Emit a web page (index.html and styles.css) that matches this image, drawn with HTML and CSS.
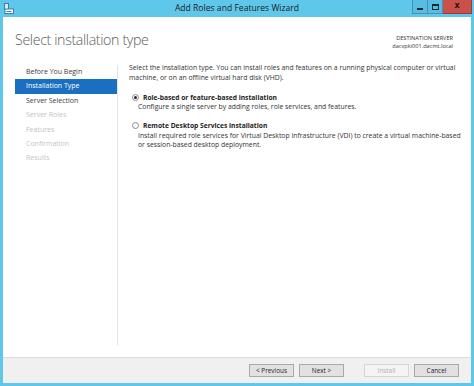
FILE: index.html
```html
<!DOCTYPE html>
<html>
<head>
<meta charset="utf-8">
<link rel="stylesheet" href="styles.css">
</head>
<body>
<div class="window">
  <div class="titlebar">
    <div class="tb-left">
      <svg class="app-icon" width="10" height="11" viewBox="0 0 10 11">
        <rect x="0.5" y="0.5" width="4" height="6" fill="#d9eef8" stroke="#3a7fae" stroke-width="1"/>
        <rect x="1" y="6" width="8.5" height="4.5" fill="#ffffff" stroke="#3a7fae" stroke-width="1"/>
        <rect x="2.5" y="8" width="5" height="1" fill="#3a7fae"/>
      </svg>
    </div>
    <div class="tb-title">Add Roles and Features Wizard</div>
    <div class="tb-buttons">
      <div class="wbtn wmin"><span class="glyph-min"></span></div>
      <div class="wbtn wmax"><span class="glyph-max"></span></div>
      <div class="wbtn wclose"><span class="glyph-close">x</span></div>
    </div>
  </div>
  <div class="client">
    <div class="header">
      <h1 class="page-title">Select installation type</h1>
      <div class="dest">
        <div class="dest-label">DESTINATION SERVER</div>
        <div class="dest-name">dacvpki001.dacmt.local</div>
      </div>
    </div>
    <div class="body">
      <nav class="nav">
        <div class="nav-item">Before You Begin</div>
        <div class="nav-item active">Installation Type</div>
        <div class="nav-item">Server Selection</div>
        <div class="nav-item disabled">Server Roles</div>
        <div class="nav-item disabled">Features</div>
        <div class="nav-item disabled">Confirmation</div>
        <div class="nav-item disabled">Results</div>
      </nav>
      <div class="content">
        <p class="intro">Select the installation type. You can install roles and features on a running physical computer or virtual machine, or on an offline virtual hard disk (VHD).</p>
        <div class="option">
          <div class="opt-head"><span class="radio checked"></span><span class="opt-title">Role-based or feature-based installation</span></div>
          <div class="opt-desc">Configure a single server by adding roles, role services, and features.</div>
        </div>
        <div class="option">
          <div class="opt-head"><span class="radio"></span><span class="opt-title">Remote Desktop Services installation</span></div>
          <div class="opt-desc">Install required role services for Virtual Desktop Infrastructure (VDI) to create a virtual machine-based or session-based desktop deployment.</div>
        </div>
      </div>
    </div>
    <div class="footer">
      <button class="btn">&lt; Previous</button>
      <button class="btn">Next &gt;</button>
      <button class="btn btn-disabled gap">Install</button>
      <button class="btn">Cancel</button>
    </div>
  </div>
</div>
</body>
</html>
```

FILE: styles.css
```css
* { box-sizing: border-box; }
html, body { margin: 0; padding: 0; }
body {
  font-family: "Open Sans", "Noto Sans", sans-serif;
  background: #5fc8ea;
}
.window {
  width: 474px;
  height: 386px;
  background: #5fc8ea;
  padding: 0 3px 3px 3px;
  display: flex;
  flex-direction: column;
}
.titlebar {
  height: 17px;
  display: grid;
  grid-template-columns: 1fr auto 1fr;
  align-items: start;
}
.tb-left { padding: 3px 0 0 1px; }
.app-icon { display: block; }
.tb-title {
  font-size: 8.6px;
  line-height: 17px;
  color: #1c1c1c;
  white-space: nowrap;
}
.tb-buttons {
  display: flex;
  justify-content: flex-end;
  margin-right: -1px;
}
.wbtn {
  height: 14px;
  display: flex;
  align-items: center;
  justify-content: center;
}
.wmin, .wmax {
  width: 16px;
  background: #58bde0;
  border: 1px solid #3f93b5;
  border-top: none;
}
.wmax { width: 15px; border-left: none; }
.wclose {
  width: 29px;
  background: #c9514a;
  border: 1px solid #9a3a35;
  border-top: none;
  border-left: none;
}
.glyph-min { width: 6px; height: 2px; background: #1a2a33; margin-top: 4px; }
.glyph-max { width: 7px; height: 6px; border: 1px solid #1a2a33; border-top-width: 2px; }
.glyph-close {
  font-family: "DejaVu Sans", sans-serif;
  font-weight: bold;
  font-size: 8px;
  line-height: 8px;
  color: #2a1212;
  margin-top: -1px;
}
.client {
  flex: 1;
  background: #ffffff;
  display: flex;
  flex-direction: column;
}
.header {
  height: 48px;
  display: flex;
  justify-content: space-between;
  align-items: flex-start;
  padding: 13px 18px 0 12px;
}
.page-title {
  margin: 0;
  font-weight: 300;
  font-size: 14.2px;
  line-height: 20px;
  color: #5b5b5b;
  letter-spacing: -0.35px;
}
.dest {
  text-align: right;
  font-size: 5.6px;
  line-height: 8px;
  color: #333;
  padding-top: 4px;
}
.body {
  flex: 1;
  display: flex;
  padding-left: 12px;
}
.nav {
  width: 103px;
  padding-top: 0;
  border-right: 1px solid #e3e3e3;
  margin-bottom: 12px;
}
.nav-item {
  height: 14.4px;
  line-height: 14.4px;
  font-size: 7px;
  color: #3c3c3c;
  padding-left: 11px;
  white-space: nowrap;
}
.nav-item.active {
  background: #1b6fc1;
  color: #ffffff;
}
.nav-item.disabled { color: #c4c4c4; }
.content {
  flex: 1;
  padding: 0 4px 0 11px;
  font-size: 6.85px;
  color: #333;
}
.intro {
  margin: -2px 0 0 0;
  line-height: 10px;
}
.option { margin-top: 9px; }
.option + .option { margin-top: 9px; }
.opt-head {
  display: flex;
  align-items: center;
  height: 10px;
  margin-left: 3px;
}
.radio {
  width: 7px;
  height: 7px;
  border: 1px solid #8a8a8a;
  border-radius: 50%;
  background: #fff;
  margin-right: 4px;
  display: flex;
  align-items: center;
  justify-content: center;
}
.radio.checked::after {
  content: "";
  width: 3px;
  height: 3px;
  border-radius: 50%;
  background: #222;
}
.opt-title { font-weight: bold; color: #222; font-size: 6.7px; }
.opt-desc {
  padding-left: 9px;
  line-height: 9.6px;
  padding-right: 0;
}
.footer {
  height: 26px;
  background: #f0f0f0;
  border-top: 1px solid #dcdcdc;
  display: flex;
  justify-content: flex-end;
  align-items: flex-start;
  padding: 6px 12px 0 0;
  gap: 5px;
}
.btn {
  width: 45px;
  height: 13px;
  padding: 0;
  background: #e1e1e1;
  border: 1px solid #a9a9a9;
  font-family: "Open Sans", "Noto Sans", sans-serif;
  font-size: 6.4px;
  color: #222;
  line-height: 11px;
}
.btn-disabled {
  background: #f4f4f4;
  border-color: #d6d6d6;
  color: #b0b0b0;
}
.btn.gap { margin-left: 15px; }
```
